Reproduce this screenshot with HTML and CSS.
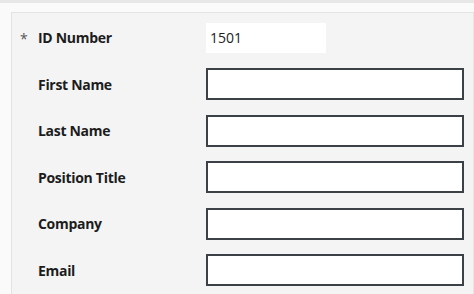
FILE: index.html
```html
<!DOCTYPE html>
<html>
<head>
<meta charset="utf-8">
<link rel="stylesheet" href="styles.css">
</head>
<body>
<div class="topbar"></div>
<div class="panel">
  <div class="row">
    <span class="req">*</span>
    <label class="label">ID Number</label>
    <div class="value">1501</div>
  </div>
  <div class="row">
    <span class="req"></span>
    <label class="label">First Name</label>
    <div class="input"></div>
  </div>
  <div class="row">
    <span class="req"></span>
    <label class="label">Last Name</label>
    <div class="input"></div>
  </div>
  <div class="row">
    <span class="req"></span>
    <label class="label">Position Title</label>
    <div class="input"></div>
  </div>
  <div class="row">
    <span class="req"></span>
    <label class="label">Company</label>
    <div class="input"></div>
  </div>
  <div class="row">
    <span class="req"></span>
    <label class="label">Email</label>
    <div class="input"></div>
  </div>
</div>
</body>
</html>
```
FILE: styles.css
```css
html, body {
  margin: 0;
  padding: 0;
  background: #fafafa;
  font-family: "Open Sans", "Noto Sans", sans-serif;
  color: #1a1a1a;
  overflow: hidden;
}
.topbar {
  height: 3px;
  background: #e7e7e7;
}
.panel {
  margin: 9px 0 0 11px;
  border: 1px solid #e3e3e3;
  border-right-color: #e6e6e6;
  background: #f4f4f4;
  padding-top: 8.8px;
  display: flex;
  flex-direction: column;
  gap: 14.5px;
  height: 300px;
  box-sizing: border-box;
}
.row {
  display: grid;
  grid-template-columns: 18px 168px 1fr;
  align-items: center;
  height: 32px;
  padding-left: 8px;
}
.req {
  font-size: 14px;
  color: #555;
  line-height: 1;
  padding-top: 2px;
}
.label {
  font-weight: 700;
  font-size: 14px;
  letter-spacing: -0.3px;
  color: #1c1c1c;
}
.value {
  width: 120px;
  height: 30px;
  background: #ffffff;
  font-size: 14px;
  line-height: 30px;
  padding-left: 4px;
  box-sizing: border-box;
  color: #222;
}
.input {
  width: 258px;
  height: 32px;
  box-sizing: border-box;
  background: #ffffff;
  border: 2px solid #3c4047;
}
```
